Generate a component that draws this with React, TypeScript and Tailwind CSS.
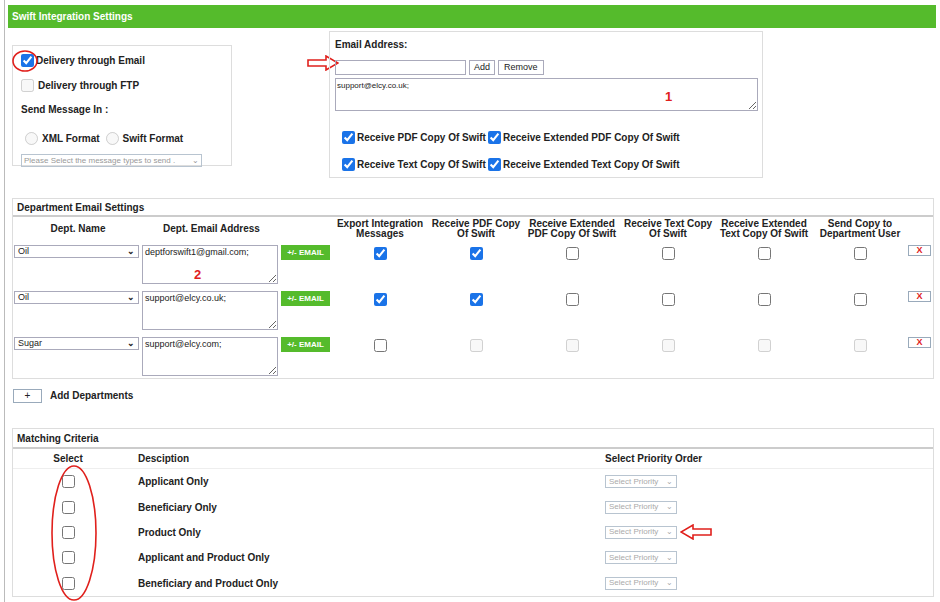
import React from 'react';

const font = { fontFamily: '"Liberation Sans", Arial, sans-serif' };

function Check({ checked = false, disabled = false }: { checked?: boolean; disabled?: boolean }) {
  return (
    <input
      type="checkbox"
      defaultChecked={checked}
      disabled={disabled}
      className="m-0 h-[13px] w-[13px] shrink-0 accent-[#1a73e8]"
    />
  );
}

function Radio() {
  return <input type="radio" className="m-0 h-[13px] w-[13px]" disabled />;
}

function Arrow({ dir = 'right' }: { dir?: 'right' | 'left' }) {
  return (
    <svg width="32" height="16" viewBox="0 0 32 16" className={dir === 'left' ? 'rotate-180' : ''}>
      <path d="M1 5 H19 V1 L31 8 L19 15 V11 H1 Z" fill="white" stroke="#e0201c" strokeWidth="1.6" />
    </svg>
  );
}

const depts = [
  { name: 'Oil', email: 'deptforswift1@gmail.com;', exp: true, pdf: true, disabled: false },
  { name: 'Oil', email: 'support@elcy.co.uk;', exp: true, pdf: true, disabled: false },
  { name: 'Sugar', email: 'support@elcy.com;', exp: false, pdf: false, disabled: true },
];

const criteria = [
  'Applicant Only',
  'Beneficiary Only',
  'Product Only',
  'Applicant and Product Only',
  'Beneficiary and Product Only',
];

const cols = 'grid grid-cols-[128px_139px_51px_96px_96px_96px_96px_96px_96px_1fr]';

export default function App() {
  return (
    <div style={font} className="relative h-[602px] w-[940px] overflow-hidden bg-white text-[10px] text-[#222]">
      <div className="absolute left-[4px] top-0 h-full w-px bg-[#bbb]" />
      <div className="ml-[8px] mr-[4px] pt-[5px]">
        <div className="flex h-[23px] items-center bg-[#55bb2c] px-[4px] text-[10px] font-bold text-white">
          Swift Integration Settings
        </div>

        <div className="flex items-start">
          {/* left box */}
          <div className="relative ml-[4px] mt-[17px] h-[121px] w-[220px] border border-[#ddd] px-[8px] pt-[7px]">
            <div className="flex items-center gap-[2px] font-bold">
              <Check checked />
              <span>Delivery through Email</span>
            </div>
            <svg width="30" height="24" className="absolute left-[-2px] top-[3px]">
              <ellipse cx="14" cy="12" rx="12" ry="10" fill="none" stroke="#e0201c" strokeWidth="1.6" />
            </svg>
            <div className="mt-[10px] flex items-center gap-[4px] font-bold">
              <Check disabled />
              <span>Delivery through FTP</span>
            </div>
            <div className="mt-[9px] font-bold">Send Message In :</div>
            <div className="ml-[4px] mt-[14px] flex items-center gap-[4px] font-bold">
              <Radio />
              <span className="mr-[2px]">XML Format</span>
              <Radio />
              <span>Swift Format</span>
            </div>
            <div className="mt-[8px] flex h-[13px] w-[181px] items-center justify-between overflow-hidden whitespace-nowrap border border-[#b8c4d0] px-[2px] text-[8px] text-[#999]">
              <span>Please Select the message types to send .</span>
              <span>⌄</span>
            </div>
          </div>

          <div className="ml-[75px] mt-[27px]">
            <Arrow />
          </div>

          {/* right box */}
          <div className="relative ml-[-10px] mt-[3px] h-[147px] w-[434px] border border-[#ddd] px-[5px] pt-[5px]">
            <div className="font-bold">Email Address:</div>
            <div className="mt-[8px] flex items-center gap-[3px]">
              <input className="h-[15px] w-[131px] border border-[#aab] outline-none" />
              <button className="h-[15px] border border-[#aab] bg-white px-[4px] text-[9px] leading-none">Add</button>
              <button className="h-[15px] border border-[#aab] bg-white px-[5px] text-[9px] leading-none">Remove</button>
            </div>
            <textarea
              defaultValue="support@elcy.co.uk;"
              className="mt-[3px] block h-[33px] w-[423px] resize border border-[#aab] p-[1px] text-[8px] outline-none"
            />
            <div className="absolute left-[335px] top-[55px] text-[13px] font-bold text-[#e0201c]">1</div>
            <div className="ml-[7px] mt-[19px] grid grid-cols-[146px_1fr] gap-y-[12px] whitespace-nowrap font-bold">
              <div className="flex items-center gap-[2px]"><Check checked /><span>Receive PDF Copy Of Swift</span></div>
              <div className="flex items-center gap-[2px]"><Check checked /><span>Receive Extended PDF Copy Of Swift</span></div>
              <div className="flex items-center gap-[2px]"><Check checked /><span>Receive Text Copy Of Swift</span></div>
              <div className="flex items-center gap-[2px]"><Check checked /><span>Receive Extended Text Copy Of Swift</span></div>
            </div>
          </div>
        </div>

        {/* departments */}
        <div className="relative ml-[4px] mt-[20px] h-[181px] w-[922px] border border-[#ddd]">
          <div className="flex h-[18px] items-center border-b-2 border-[#ccc] px-[4px] font-bold">Department Email Settings</div>
          <div className={`${cols} mt-[2px] h-[22px] whitespace-nowrap px-[1px] text-center font-bold leading-[10px]`}>
            <div className="pt-[5px]">Dept. Name</div>
            <div className="pt-[5px]">Dept. Email Address</div>
            <div />
            <div>Export Integration<br />Messages</div>
            <div>Receive PDF Copy<br />Of Swift</div>
            <div>Receive Extended<br />PDF Copy Of Swift</div>
            <div>Receive Text Copy<br />Of Swift</div>
            <div>Receive Extended<br />Text Copy Of Swift</div>
            <div>Send Copy to<br />Department User</div>
            <div />
          </div>
          {depts.map((d, i) => (
            <div key={i} className={`${cols} mt-[4px] h-[42px] px-[1px]`}>
              <div className="flex h-[13px] w-[125px] items-center justify-between border border-[#aab] px-[3px] text-[9px]">
                <span>{d.name}</span><span className="font-bold">⌄</span>
              </div>
              <textarea
                defaultValue={d.email}
                className="block h-[39px] w-[136px] resize border border-[#aab] px-[2px] text-[9px] outline-none"
              />
              <div className="flex h-[15px] w-[49px] items-center justify-center bg-[#55bb2c] text-[8px] font-bold text-white">+/- EMAIL</div>
              <div className="flex justify-center pt-[2px]"><Check checked={d.exp} /></div>
              <div className="flex justify-center pt-[2px]"><Check checked={d.pdf} disabled={d.disabled} /></div>
              <div className="flex justify-center pt-[2px]"><Check disabled={d.disabled} /></div>
              <div className="flex justify-center pt-[2px]"><Check disabled={d.disabled} /></div>
              <div className="flex justify-center pt-[2px]"><Check disabled={d.disabled} /></div>
              <div className="flex justify-center pt-[2px]"><Check disabled={d.disabled} /></div>
              <div>
                <div className="flex h-[11px] w-[23px] items-center justify-center border border-[#9ab] text-[9px] font-bold text-[#e0201c]">X</div>
              </div>
            </div>
          ))}
          <div className="absolute left-[181px] top-[66px] text-[13px] font-bold text-[#e0201c]">2</div>
        </div>

        <div className="ml-[5px] mt-[9px] flex items-center gap-[8px] font-bold">
          <div className="flex h-[14px] w-[29px] items-center justify-center border border-[#9ab] text-[10px] font-normal">+</div>
          <span>Add Departments</span>
        </div>

        {/* matching criteria */}
        <div className="relative ml-[4px] mt-[25px] h-[169px] w-[922px] border border-[#ddd]">
          <div className="flex h-[20px] items-center border-b-2 border-[#ccc] px-[4px] font-bold">Matching Criteria</div>
          <div className="grid h-[20px] grid-cols-[110px_482px_1fr] items-center border-b border-[#eee] font-bold">
            <div className="text-center">Select</div>
            <div className="pl-[15px]">Desciption</div>
            <div>Select Priority Order</div>
          </div>
          {criteria.map((c) => (
            <div key={c} className="grid h-[25.4px] grid-cols-[110px_482px_1fr] items-center font-bold">
              <div className="flex justify-center"><Check /></div>
              <div className="pl-[15px]">{c}</div>
              <div className="flex items-center gap-[3px]">
                <div className="flex h-[13px] w-[72px] items-center justify-between border border-[#b8c4d0] px-[3px] text-[8px] font-normal text-[#aaa]">
                  <span>Select Priority</span><span>⌄</span>
                </div>
                {c === 'Product Only' && <Arrow dir="left" />}
              </div>
            </div>
          ))}
          <svg width="50" height="140" className="absolute left-[36px] top-[34px]">
            <ellipse cx="25" cy="70" rx="22" ry="67" fill="none" stroke="#e0201c" strokeWidth="1.6" />
          </svg>
        </div>
      </div>
    </div>
  );
}
